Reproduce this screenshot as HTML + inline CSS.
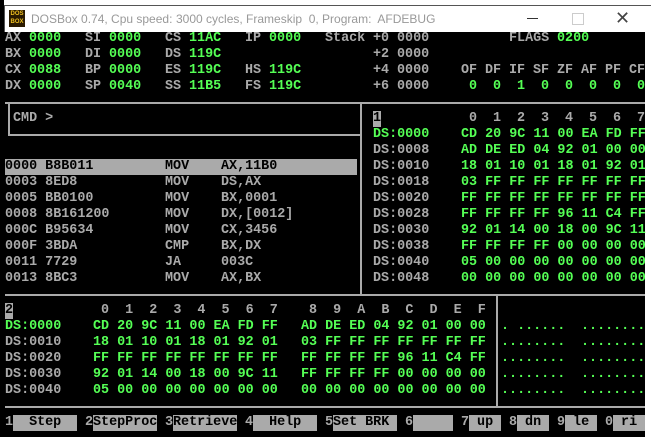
<!DOCTYPE html>
<html><head><meta charset="utf-8"><style>
*{margin:0;padding:0}
body{width:651px;height:437px;overflow:hidden;background:#fff;position:relative;font-family:"Liberation Mono",monospace}
#blk{position:absolute;left:0;top:31px;width:645px;height:406px;background:#000}
#title{position:absolute;left:4px;top:5px;width:647px;height:26px;background:#fff;border-top:1px solid #555;border-left:1px solid #555}
.tt{position:absolute;top:6px;font:12px "Liberation Sans",sans-serif;color:#999;white-space:pre}
.r{position:absolute;left:5px;height:16px;width:640px}
.r span{position:absolute;top:0;font-size:13.4px;font-weight:bold;line-height:16px;white-space:pre;color:#aaa}
.r span.g{color:#55ff55}
.r span.h{background:#aaa;color:#000}
.r span.k{color:#000}
.hl{position:absolute;height:2px;background:#aaa}
.vl{position:absolute;width:2px;background:#aaa}
</style></head><body>
<div style="position:absolute;left:0;top:0;width:4px;height:437px;background:#000"></div>
<div id="blk"></div>
<div id="title">
 <div style="position:absolute;left:4px;top:4px;width:16px;height:17px;background:#2a1a00;color:#f0c020;font:bold 6px 'Liberation Sans',sans-serif;text-align:center;line-height:8px">DOS<br>BOX</div>
 <div class="tt" style="left:26px">DOSBox 0.74, Cpu speed:</div>
 <div class="tt" style="left:171px">3000 cycles, Frameskip  0, Program:  AFDEBUG</div>
 <div style="position:absolute;left:522px;top:12px;width:11px;height:1px;background:#333"></div>
 <div style="position:absolute;left:567px;top:7px;width:10px;height:10px;border:1px solid #ccc"></div>
 <div class="tt" style="left:610px;top:2px;font-size:18px;color:#444">✕</div>
</div>

<div class="hl" style="left:5px;top:102px;width:640px"></div>
<div class="hl" style="left:8px;top:134px;width:354px"></div>
<div class="vl" style="left:8px;top:102px;height:34px"></div>
<div class="vl" style="left:360px;top:102px;height:193px"></div>
<div class="hl" style="left:5px;top:294px;width:640px"></div>
<div class="vl" style="left:496px;top:294px;height:113px"></div>
<div class="hl" style="left:5px;top:406px;width:640px"></div>
<div style="position:absolute;left:5px;top:159px;width:352px;height:16px;background:#aaa"></div>

<div class="r" style="top:31px"><span style="left:0">AX</span><span class="g" style="left:24px">0000</span><span style="left:80px">SI</span><span class="g" style="left:104px">0000</span><span style="left:160px">CS</span><span class="g" style="left:184px">11AC</span><span style="left:240px">IP</span><span class="g" style="left:264px">0000</span><span style="left:320px">Stack</span><span style="left:368px">+0</span><span style="left:392px">0000</span><span style="left:504px">FLAGS</span><span class="g" style="left:552px">0200</span></div>
<div class="r" style="top:47px"><span style="left:0">BX</span><span class="g" style="left:24px">0000</span><span style="left:80px">DI</span><span class="g" style="left:104px">0000</span><span style="left:160px">DS</span><span class="g" style="left:184px">119C</span><span style="left:368px">+2</span><span style="left:392px">0000</span></div>
<div class="r" style="top:63px"><span style="left:0">CX</span><span class="g" style="left:24px">0088</span><span style="left:80px">BP</span><span class="g" style="left:104px">0000</span><span style="left:160px">ES</span><span class="g" style="left:184px">119C</span><span style="left:240px">HS</span><span class="g" style="left:264px">119C</span><span style="left:368px">+4</span><span style="left:392px">0000</span><span style="left:456px">OF</span><span style="left:480px">DF</span><span style="left:504px">IF</span><span style="left:528px">SF</span><span style="left:552px">ZF</span><span style="left:576px">AF</span><span style="left:600px">PF</span><span style="left:624px">CF</span></div>
<div class="r" style="top:79px"><span style="left:0">DX</span><span class="g" style="left:24px">0000</span><span style="left:80px">SP</span><span class="g" style="left:104px">0040</span><span style="left:160px">SS</span><span class="g" style="left:184px">11B5</span><span style="left:240px">FS</span><span class="g" style="left:264px">119C</span><span style="left:368px">+6</span><span style="left:392px">0000</span><span class="g" style="left:464px">0</span><span class="g" style="left:488px">0</span><span class="g" style="left:512px">1</span><span class="g" style="left:536px">0</span><span class="g" style="left:560px">0</span><span class="g" style="left:584px">0</span><span class="g" style="left:608px">0</span><span class="g" style="left:632px">0</span></div>

<div class="r" style="top:111px"><span style="left:8px">CMD &gt;</span><span class="h" style="left:368px">1</span><span style="left:464px">0</span><span style="left:488px">1</span><span style="left:512px">2</span><span style="left:536px">3</span><span style="left:560px">4</span><span style="left:584px">5</span><span style="left:608px">6</span><span style="left:632px">7</span></div>

<div class="r" style="top:127px"><span class="g" style="left:368px">DS:0000</span><span class="g" style="left:456px">CD 20 9C 11 00 EA FD FF</span></div>
<div class="r" style="top:143px"><span style="left:368px">DS:0008</span><span class="g" style="left:456px">AD DE ED 04 92 01 00 00</span></div>
<div class="r" style="top:159px"><span class="k" style="left:0">0000 B8B011</span><span class="k" style="left:160px">MOV</span><span class="k" style="left:216px">AX,11B0</span><span style="left:368px">DS:0010</span><span class="g" style="left:456px">18 01 10 01 18 01 92 01</span></div>
<div class="r" style="top:175px"><span style="left:0">0003 8ED8</span><span style="left:160px">MOV</span><span style="left:216px">DS,AX</span><span style="left:368px">DS:0018</span><span class="g" style="left:456px">03 FF FF FF FF FF FF FF</span></div>
<div class="r" style="top:191px"><span style="left:0">0005 BB0100</span><span style="left:160px">MOV</span><span style="left:216px">BX,0001</span><span style="left:368px">DS:0020</span><span class="g" style="left:456px">FF FF FF FF FF FF FF FF</span></div>
<div class="r" style="top:207px"><span style="left:0">0008 8B161200</span><span style="left:160px">MOV</span><span style="left:216px">DX,[0012]</span><span style="left:368px">DS:0028</span><span class="g" style="left:456px">FF FF FF FF 96 11 C4 FF</span></div>
<div class="r" style="top:223px"><span style="left:0">000C B95634</span><span style="left:160px">MOV</span><span style="left:216px">CX,3456</span><span style="left:368px">DS:0030</span><span class="g" style="left:456px">92 01 14 00 18 00 9C 11</span></div>
<div class="r" style="top:239px"><span style="left:0">000F 3BDA</span><span style="left:160px">CMP</span><span style="left:216px">BX,DX</span><span style="left:368px">DS:0038</span><span class="g" style="left:456px">FF FF FF FF 00 00 00 00</span></div>
<div class="r" style="top:255px"><span style="left:0">0011 7729</span><span style="left:160px">JA</span><span style="left:216px">003C</span><span style="left:368px">DS:0040</span><span class="g" style="left:456px">05 00 00 00 00 00 00 00</span></div>
<div class="r" style="top:271px"><span style="left:0">0013 8BC3</span><span style="left:160px">MOV</span><span style="left:216px">AX,BX</span><span style="left:368px">DS:0048</span><span class="g" style="left:456px">00 00 00 00 00 00 00 00</span></div>

<div class="r" style="top:303px"><span class="h" style="left:0">2</span><span style="left:96px">0  1  2  3  4  5  6  7</span><span style="left:304px">8  9  A  B  C  D  E  F</span></div>
<div class="r" style="top:319px"><span class="g" style="left:0">DS:0000</span><span class="g" style="left:88px">CD 20 9C 11 00 EA FD FF</span><span class="g" style="left:296px">AD DE ED 04 92 01 00 00</span><span class="g" style="left:496px">. ......</span><span class="g" style="left:576px">........</span></div>
<div class="r" style="top:335px"><span style="left:0">DS:0010</span><span class="g" style="left:88px">18 01 10 01 18 01 92 01</span><span class="g" style="left:296px">03 FF FF FF FF FF FF FF</span><span class="g" style="left:496px">........</span><span class="g" style="left:576px">........</span></div>
<div class="r" style="top:351px"><span style="left:0">DS:0020</span><span class="g" style="left:88px">FF FF FF FF FF FF FF FF</span><span class="g" style="left:296px">FF FF FF FF 96 11 C4 FF</span><span class="g" style="left:496px">........</span><span class="g" style="left:576px">........</span></div>
<div class="r" style="top:367px"><span style="left:0">DS:0030</span><span class="g" style="left:88px">92 01 14 00 18 00 9C 11</span><span class="g" style="left:296px">FF FF FF FF 00 00 00 00</span><span class="g" style="left:496px">........</span><span class="g" style="left:576px">........</span></div>
<div class="r" style="top:383px"><span style="left:0">DS:0040</span><span class="g" style="left:88px">05 00 00 00 00 00 00 00</span><span class="g" style="left:296px">00 00 00 00 00 00 00 00</span><span class="g" style="left:496px">........</span><span class="g" style="left:576px">........</span></div>

<div class="r" style="top:415px"><span style="left:0">1</span><span class="h" style="left:8px;width:64px">  Step  </span><span style="left:80px">2</span><span class="h" style="left:88px;width:64px">StepProc</span><span style="left:160px">3</span><span class="h" style="left:168px;width:64px">Retrieve</span><span style="left:240px">4</span><span class="h" style="left:248px;width:64px">  Help  </span><span style="left:320px">5</span><span class="h" style="left:328px;width:64px">Set BRK </span><span style="left:400px">6</span><span class="h" style="left:408px;width:40px"> </span><span style="left:456px">7</span><span class="h" style="left:464px;width:32px"> up </span><span style="left:504px">8</span><span class="h" style="left:512px;width:32px"> dn </span><span style="left:552px">9</span><span class="h" style="left:560px;width:32px"> le </span><span style="left:600px">0</span><span class="h" style="left:608px;width:32px"> ri </span></div>
</body></html>
